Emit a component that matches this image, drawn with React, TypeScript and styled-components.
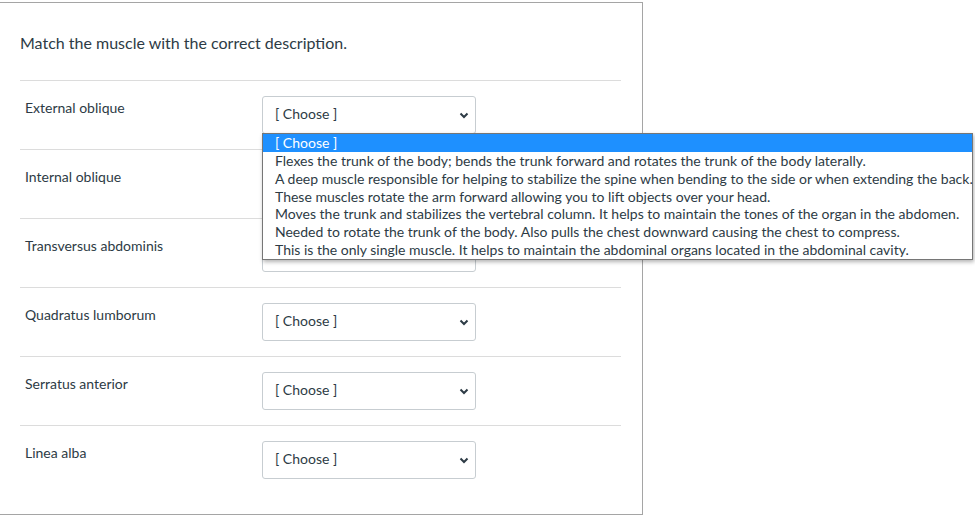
import React from "react";
import styled, { createGlobalStyle } from "styled-components";

const Global = createGlobalStyle`
  html, body { margin: 0; padding: 0; background: #fff; }
  body { font-family: Lato, "Noto Sans", sans-serif; color: #2d3b45; }
`;

const Panel = styled.div`
  margin-top: 2px;
  width: 643px;
  height: 513px;
  box-sizing: border-box;
  border: 1px solid #a5a5a5;
  border-left: none;
  padding: 0 21px 0 20px;
  background: #fff;
`;

const Title = styled.div`
  font-size: 16px;
  line-height: 24px;
  padding-top: 28px;
  padding-bottom: 25px;
  border-bottom: 1px solid #dcdcdc;
`;

const Row = styled.div<{ last?: boolean }>`
  display: grid;
  grid-template-columns: 242px 214px;
  align-items: start;
  padding: 15px 0;
  border-bottom: ${(p) => (p.last ? "none" : "1px solid #dcdcdc")};
`;

const Label = styled.div`
  font-size: 14px;
  line-height: 20px;
  padding: 2px 0 0 5px;
`;

const SelectWrap = styled.div`
  position: relative;
`;

const SelectBox = styled.div`
  box-sizing: border-box;
  height: 38px;
  display: flex;
  align-items: center;
  justify-content: space-between;
  padding: 0 6px 3px 12px;
  border: 1px solid #c7cdd1;
  border-radius: 3px;
  background: #fff;
  font-size: 14px;
  color: #2d3b45;

  svg {
    margin-top: 3px;
  }
`;

const List = styled.div`
  position: absolute;
  top: 37px;
  left: 0;
  width: 711px;
  box-sizing: border-box;
  border: 1px solid #767676;
  background: #fff;
  box-shadow: 1px 2px 4px rgba(0, 0, 0, 0.3);
  z-index: 10;
`;

const Option = styled.div<{ selected?: boolean }>`
  height: 17.85px;
  line-height: 17.85px;
  padding-left: 12px;
  font-size: 14px;
  white-space: nowrap;
  background: ${(p) => (p.selected ? "#1e90ff" : "transparent")};
  color: ${(p) => (p.selected ? "#fff" : "#2d3b45")};
`;

const Chevron = () => (
  <svg width="10" height="7" viewBox="0 0 10 7">
    <path d="M1.5 1.5 L5 5 L8.5 1.5" fill="none" stroke="#2d3b45" strokeWidth="2" />
  </svg>
);

const muscles = [
  "External oblique",
  "Internal oblique",
  "Transversus abdominis",
  "Quadratus lumborum",
  "Serratus anterior",
  "Linea alba",
];

const options = [
  "[ Choose ]",
  "Flexes the trunk of the body; bends the trunk forward and rotates the trunk of the body laterally.",
  "A deep muscle responsible for helping to stabilize the spine when bending to the side or when extending the back.",
  "These muscles rotate the arm forward allowing you to lift objects over your head.",
  "Moves the trunk and stabilizes the vertebral column. It helps to maintain the tones of the organ in the abdomen.",
  "Needed to rotate the trunk of the body. Also pulls the chest downward causing the chest to compress.",
  "This is the only single muscle. It helps to maintain the abdominal organs located in the abdominal cavity.",
];

export default function App() {
  return (
    <>
      <Global />
      <Panel>
        <Title>Match the muscle with the correct description.</Title>
        {muscles.map((m, i) => (
          <Row key={m} last={i === muscles.length - 1}>
            <Label>{m}</Label>
            <SelectWrap>
              <SelectBox>
                <span>[ Choose ]</span>
                <Chevron />
              </SelectBox>
              {i === 0 && (
                <List>
                  {options.map((o, j) => (
                    <Option key={j} selected={j === 0}>
                      {o}
                    </Option>
                  ))}
                </List>
              )}
            </SelectWrap>
          </Row>
        ))}
      </Panel>
    </>
  );
}
